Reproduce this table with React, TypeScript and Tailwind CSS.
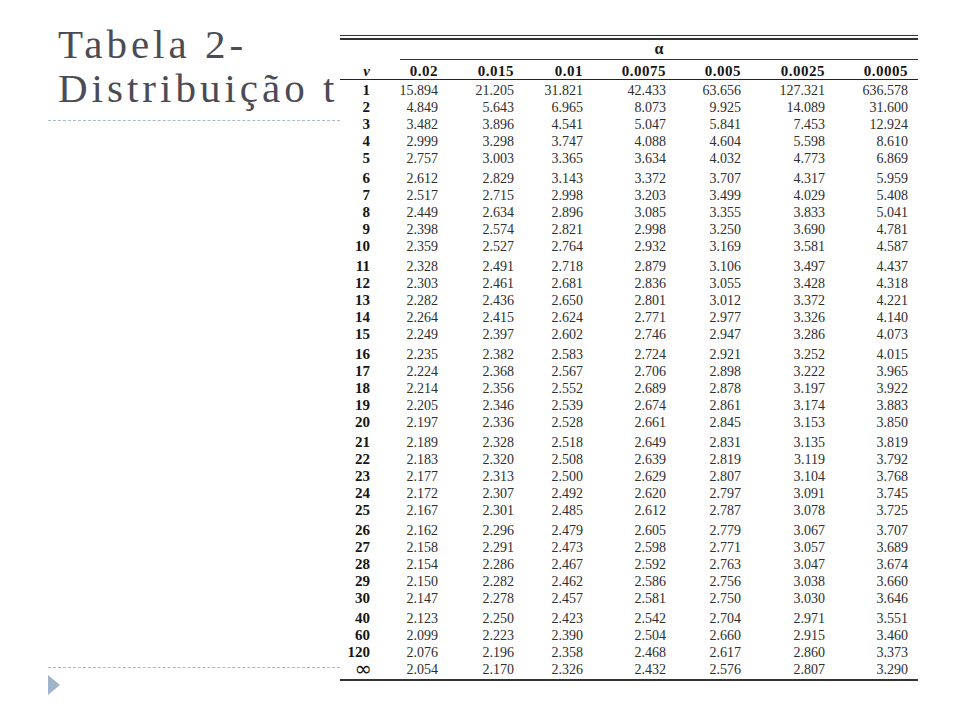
import React from 'react';

const alphas = ['0.02', '0.015', '0.01', '0.0075', '0.005', '0.0025', '0.0005'];

const groups: [string, string[]][][] = [
  [
    ['1', ['15.894', '21.205', '31.821', '42.433', '63.656', '127.321', '636.578']],
    ['2', ['4.849', '5.643', '6.965', '8.073', '9.925', '14.089', '31.600']],
    ['3', ['3.482', '3.896', '4.541', '5.047', '5.841', '7.453', '12.924']],
    ['4', ['2.999', '3.298', '3.747', '4.088', '4.604', '5.598', '8.610']],
    ['5', ['2.757', '3.003', '3.365', '3.634', '4.032', '4.773', '6.869']],
  ],
  [
    ['6', ['2.612', '2.829', '3.143', '3.372', '3.707', '4.317', '5.959']],
    ['7', ['2.517', '2.715', '2.998', '3.203', '3.499', '4.029', '5.408']],
    ['8', ['2.449', '2.634', '2.896', '3.085', '3.355', '3.833', '5.041']],
    ['9', ['2.398', '2.574', '2.821', '2.998', '3.250', '3.690', '4.781']],
    ['10', ['2.359', '2.527', '2.764', '2.932', '3.169', '3.581', '4.587']],
  ],
  [
    ['11', ['2.328', '2.491', '2.718', '2.879', '3.106', '3.497', '4.437']],
    ['12', ['2.303', '2.461', '2.681', '2.836', '3.055', '3.428', '4.318']],
    ['13', ['2.282', '2.436', '2.650', '2.801', '3.012', '3.372', '4.221']],
    ['14', ['2.264', '2.415', '2.624', '2.771', '2.977', '3.326', '4.140']],
    ['15', ['2.249', '2.397', '2.602', '2.746', '2.947', '3.286', '4.073']],
  ],
  [
    ['16', ['2.235', '2.382', '2.583', '2.724', '2.921', '3.252', '4.015']],
    ['17', ['2.224', '2.368', '2.567', '2.706', '2.898', '3.222', '3.965']],
    ['18', ['2.214', '2.356', '2.552', '2.689', '2.878', '3.197', '3.922']],
    ['19', ['2.205', '2.346', '2.539', '2.674', '2.861', '3.174', '3.883']],
    ['20', ['2.197', '2.336', '2.528', '2.661', '2.845', '3.153', '3.850']],
  ],
  [
    ['21', ['2.189', '2.328', '2.518', '2.649', '2.831', '3.135', '3.819']],
    ['22', ['2.183', '2.320', '2.508', '2.639', '2.819', '3.119', '3.792']],
    ['23', ['2.177', '2.313', '2.500', '2.629', '2.807', '3.104', '3.768']],
    ['24', ['2.172', '2.307', '2.492', '2.620', '2.797', '3.091', '3.745']],
    ['25', ['2.167', '2.301', '2.485', '2.612', '2.787', '3.078', '3.725']],
  ],
  [
    ['26', ['2.162', '2.296', '2.479', '2.605', '2.779', '3.067', '3.707']],
    ['27', ['2.158', '2.291', '2.473', '2.598', '2.771', '3.057', '3.689']],
    ['28', ['2.154', '2.286', '2.467', '2.592', '2.763', '3.047', '3.674']],
    ['29', ['2.150', '2.282', '2.462', '2.586', '2.756', '3.038', '3.660']],
    ['30', ['2.147', '2.278', '2.457', '2.581', '2.750', '3.030', '3.646']],
  ],
  [
    ['40', ['2.123', '2.250', '2.423', '2.542', '2.704', '2.971', '3.551']],
    ['60', ['2.099', '2.223', '2.390', '2.504', '2.660', '2.915', '3.460']],
    ['120', ['2.076', '2.196', '2.358', '2.468', '2.617', '2.860', '3.373']],
    ['∞', ['2.054', '2.170', '2.326', '2.432', '2.576', '2.807', '3.290']],
  ],
];

const cols = 'grid grid-cols-[52px_46px_76px_69px_83px_75px_84px_83px] grid-rows-[17px]';

export default function App() {
  return (
    <div className="flex w-[960px] h-[720px] bg-white overflow-hidden">
      {/* left: slide title */}
      <div className="flex flex-col w-[340px] pl-[48px]">
        <h1 className="mt-[22px] pl-[10px] font-['Liberation_Serif',serif] text-[41px] leading-[44px] font-normal text-[#4b4b56] tracking-[4px]">
          Tabela 2-
          <br />
          Distribuição t
        </h1>
        <div className="mt-[10px] border-t border-dashed border-[#a9b9c8]" />
        <div className="mt-auto border-t border-dashed border-[#a9b9c8]" />
        <div className="mt-[7px] mb-[25px] w-0 h-0 border-y-[10px] border-y-transparent border-l-[12px] border-l-[#a0b5ca]" />
      </div>

      {/* right: t table */}
      <div className="w-[578px] pt-[35px] font-['Liberation_Serif',serif] text-[#2e2e2e]">
        <div className="h-px bg-[#333]" />
        <div className="mt-[1.5px] h-[2px] bg-[#333]" />
        <div className="flex h-[19px] items-center pl-[60px]">
          <span className="flex-1 text-center text-[16px] font-bold text-[#1a1a1a]">α</span>
        </div>
        <div className="ml-[60px] h-px bg-[#333]" />
        <div className="grid grid-cols-[52px_46px_76px_69px_83px_75px_84px_83px] h-[19px] items-center text-[15px] font-bold text-[#151515]">
          <span className="pr-[22px] text-right italic">v</span>
          {alphas.map((a) => (
            <span key={a} className="text-right tracking-[0.5px]">{a}</span>
          ))}
        </div>
        <div className="h-px bg-[#222]" />
        <div className="pt-[2px]">
          {groups.map((g, gi) => (
            <div key={gi} className={gi > 0 ? 'mt-[3px]' : ''}>
              {g.map(([v, vals]) => (
                <div key={v} className={`${cols} h-[17px] items-center text-[14px] leading-[17px]`}>
                  {v === '∞' ? (
                    <span className="pr-[20px] text-right font-['DejaVu_Sans',sans-serif] text-[21px] leading-[17px] text-[#151515]">∞</span>
                  ) : (
                    <span className="pr-[22px] text-right text-[15px] font-bold text-[#151515]">{v}</span>
                  )}
                  {vals.map((x, i) => (
                    <span key={i} className="text-right">{x}</span>
                  ))}
                </div>
              ))}
            </div>
          ))}
        </div>
        <div className="mt-px h-[2px] bg-[#333]" />
      </div>
    </div>
  );
}
